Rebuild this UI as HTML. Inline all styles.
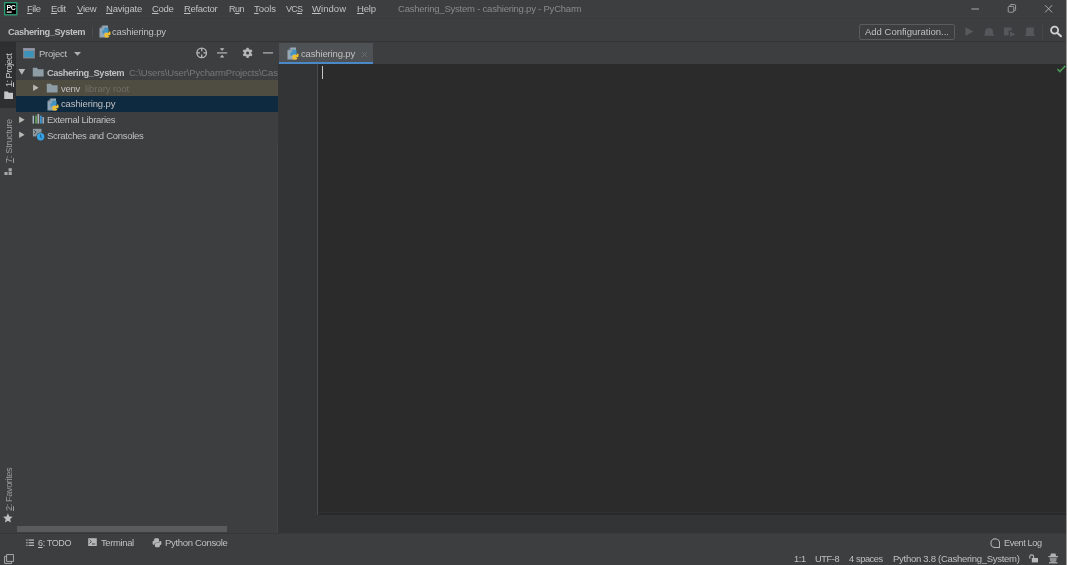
<!DOCTYPE html>
<html lang="en"><head><meta charset="utf-8"><title>Cashering_System - cashiering.py - PyCharm</title>
<style>
html,body{margin:0;padding:0;background:#fff;}
body{width:1068px;height:565px;overflow:hidden;}
#app{position:relative;width:1068px;height:565px;overflow:hidden;background:#fff;font-family:"Liberation Sans",sans-serif;color:#bbbbbb;}
#app div,#app svg{position:absolute;}
.t{position:absolute;will-change:transform;white-space:nowrap;line-height:12px;font-size:9.5px;color:#c0c0c0;}
.t u{text-decoration:underline;text-underline-offset:1px;text-decoration-thickness:0.8px;}
.t.v{transform-origin:0 0;transform:rotate(-90deg);font-size:9.2px;}
#win{left:0;top:0;width:1066px;height:565px;background:#3d3e40;}
#edge{left:1066px;top:0;width:1px;height:565px;background:#9b9b9c;}
.hl{left:0;width:1066px;height:1px;}
#strip-sel{left:0;top:42px;width:16px;height:66px;background:#2d2f30;}
#proj{left:16px;top:42px;width:262px;height:491px;overflow:hidden;}
#row-venv{left:16px;top:80px;width:262px;height:16px;background:#4f4c41;}
#row-sel{left:16px;top:96px;width:262px;height:15.7px;background:#0e2a41;}
#pathclip{left:16px;top:64px;width:262px;height:16px;overflow:hidden;}
#hscroll{left:17px;top:526px;width:210px;height:6.4px;background:#595b5d;}
#tabbar{left:278px;top:42px;width:788px;height:22px;background:#3d3e40;}
#tab{left:279.2px;top:43px;width:94px;height:21px;background:#4e5254;}
#tabline{left:279.2px;top:61.7px;width:94px;height:2.3px;background:#4a88c7;}
#gutter{left:278px;top:64px;width:40px;height:469px;background:#333436;}
#pborder{left:277px;top:143px;width:1px;height:390px;background:#434547;}
#gutline{left:317px;top:64px;width:1px;height:451px;background:#494b4d;}
#editor{left:318px;top:64px;width:748px;height:448px;background:#2b2b2b;}
#edbot{left:318px;top:515px;width:748px;height:18px;background:#333436;}
#eddark{left:318px;top:513px;width:748px;height:2px;background:#28292a;}
#edbotline{left:318px;top:512px;width:748px;height:1px;background:#303132;}
#caret{left:322px;top:66px;width:1.3px;height:13px;background:#c4c4c4;}
#addbtn{left:859.3px;top:23.8px;width:93.8px;height:14.6px;border:0.8px solid #595b5c;border-radius:2px;background:#3d3e40;}
#tbsep{left:1041.5px;top:24px;width:0.8px;height:16px;background:#454749;}
#navsep{left:92.2px;top:27px;width:0.8px;height:10px;background:#494b4d;}

</style></head>
<body>
<div id="app">
<div id="win"></div>
<div id="edge"></div>
<div class="hl" style="top:18px;background:#3a3b3d;"></div>
<div class="hl" style="top:19px;background:#3f4042;"></div>
<div class="hl" style="top:41px;background:#343537;"></div>
<div id="strip-sel"></div>
<div id="row-venv"></div>
<div id="row-sel"></div>
<div id="hscroll"></div>
<div class="hl" style="top:533px;background:#353739;width:278px;"></div>
<div class="hl" style="top:533px;left:278px;width:788px;background:#393a3c;"></div>
<div id="tabbar"></div>
<div id="tab"></div>
<div id="tabline"></div>
<div id="gutter"></div>
<div id="pborder"></div>
<div id="editor"></div>
<div id="edbot"></div>
<div id="edbotline"></div>
<div id="eddark"></div>
<div id="gutline"></div>
<div id="caret"></div>
<div id="addbtn"></div>
<div id="tbsep"></div>
<div id="navsep"></div>
<!-- PC logo -->
<svg style="left:4.2px;top:2px;will-change:transform" width="13.5" height="13.5" viewBox="0 0 13.5 13.5">
 <rect x="0" y="0" width="13.5" height="13.5" rx="0.8" fill="#2f9e74"/>
 <rect x="1.4" y="1.4" width="10.7" height="10.7" fill="#000"/>
 <text x="2.5" y="7.6" font-family="Liberation Sans, sans-serif" font-weight="bold" font-size="7" letter-spacing="-0.45" fill="#fff">PC</text>
 <rect x="2.7" y="9.4" width="5" height="1.4" fill="#d8d8d8"/>
</svg>
<!-- nav bar / tab / tree py icons -->
<svg style="left:98.6px;top:24.9px" width="12.6" height="13.1" viewBox="0 0 13 13.5"><path d="M3.5 0.4 H9.3 V12.9 H0.5 V3.4 Z" fill="#9db1c2" opacity="0.9"/>
   <path d="M0.5 3.4 L3.5 0.4 V3.4 Z" fill="#3d3e40" opacity="0.5"/>
   <path d="M6.2 2.9 h2.4 a1.3 1.3 0 0 1 1.3 1.3 v2.1 a1.3 1.3 0 0 1 -1.3 1.3 h-2.1 a1.2 1.2 0 0 0 -1.2 1.2 v0.5 h-0.5 a1.2 1.2 0 0 1 -1.2 -1.2 v-1.7 a1.2 1.2 0 0 1 1.2 -1.2 h2.5 v-0.5 h-2.4 v-0.5 a1.3 1.3 0 0 1 1.3 -1.3 Z" fill="#3f94c3"/>
   <circle cx="6.3" cy="4" r="0.45" fill="#2b4f66"/>
   <path d="M10.2 6.6 h0.5 a1.2 1.2 0 0 1 1.2 1.2 v1.7 a1.2 1.2 0 0 1 -1.2 1.2 h-2.5 v0.5 h2.4 v0.5 a1.3 1.3 0 0 1 -1.3 1.3 h-2.4 a1.3 1.3 0 0 1 -1.3 -1.3 v-2.1 a1.3 1.3 0 0 1 1.3 -1.3 h2.1 a1.2 1.2 0 0 0 1.2 -1.2 Z" fill="#f0c12e"/></svg>
<svg style="left:286.9px;top:46.9px" width="12.6" height="13.1" viewBox="0 0 13 13.5"><path d="M3.5 0.4 H9.3 V12.9 H0.5 V3.4 Z" fill="#9db1c2" opacity="0.9"/>
   <path d="M0.5 3.4 L3.5 0.4 V3.4 Z" fill="#3d3e40" opacity="0.5"/>
   <path d="M6.2 2.9 h2.4 a1.3 1.3 0 0 1 1.3 1.3 v2.1 a1.3 1.3 0 0 1 -1.3 1.3 h-2.1 a1.2 1.2 0 0 0 -1.2 1.2 v0.5 h-0.5 a1.2 1.2 0 0 1 -1.2 -1.2 v-1.7 a1.2 1.2 0 0 1 1.2 -1.2 h2.5 v-0.5 h-2.4 v-0.5 a1.3 1.3 0 0 1 1.3 -1.3 Z" fill="#3f94c3"/>
   <circle cx="6.3" cy="4" r="0.45" fill="#2b4f66"/>
   <path d="M10.2 6.6 h0.5 a1.2 1.2 0 0 1 1.2 1.2 v1.7 a1.2 1.2 0 0 1 -1.2 1.2 h-2.5 v0.5 h2.4 v0.5 a1.3 1.3 0 0 1 -1.3 1.3 h-2.4 a1.3 1.3 0 0 1 -1.3 -1.3 v-2.1 a1.3 1.3 0 0 1 1.3 -1.3 h2.1 a1.2 1.2 0 0 0 1.2 -1.2 Z" fill="#f0c12e"/></svg>
<svg style="left:47.3px;top:97.8px" width="12.6" height="13.1" viewBox="0 0 13 13.5"><path d="M3.5 0.4 H9.3 V12.9 H0.5 V3.4 Z" fill="#9db1c2" opacity="0.9"/>
   <path d="M0.5 3.4 L3.5 0.4 V3.4 Z" fill="#3d3e40" opacity="0.5"/>
   <path d="M6.2 2.9 h2.4 a1.3 1.3 0 0 1 1.3 1.3 v2.1 a1.3 1.3 0 0 1 -1.3 1.3 h-2.1 a1.2 1.2 0 0 0 -1.2 1.2 v0.5 h-0.5 a1.2 1.2 0 0 1 -1.2 -1.2 v-1.7 a1.2 1.2 0 0 1 1.2 -1.2 h2.5 v-0.5 h-2.4 v-0.5 a1.3 1.3 0 0 1 1.3 -1.3 Z" fill="#3f94c3"/>
   <circle cx="6.3" cy="4" r="0.45" fill="#2b4f66"/>
   <path d="M10.2 6.6 h0.5 a1.2 1.2 0 0 1 1.2 1.2 v1.7 a1.2 1.2 0 0 1 -1.2 1.2 h-2.5 v0.5 h2.4 v0.5 a1.3 1.3 0 0 1 -1.3 1.3 h-2.4 a1.3 1.3 0 0 1 -1.3 -1.3 v-2.1 a1.3 1.3 0 0 1 1.3 -1.3 h2.1 a1.2 1.2 0 0 0 1.2 -1.2 Z" fill="#f0c12e"/></svg>
<!-- tab close -->
<svg style="left:361px;top:51px" width="7" height="7" viewBox="0 0 7 7"><path d="M1 1 L6 6 M6 1 L1 6" stroke="#717476" stroke-width="0.8" fill="none"/></svg>
<!-- window controls -->
<svg style="left:970px;top:3px" width="90" height="12" viewBox="0 0 90 12">
 <path d="M1.4 6 H9" stroke="#a8aaab" stroke-width="1"/>
 <rect x="38.2" y="3.4" width="5.6" height="5.8" rx="1" fill="none" stroke="#a8aaab" stroke-width="0.9"/>
 <path d="M40 3.2 V2.6 a1 1 0 0 1 1 -1 H44.6 a1 1 0 0 1 1 1 V6.6 a1 1 0 0 1 -1 1 H44" fill="none" stroke="#a8aaab" stroke-width="0.9"/>
 <path d="M75 2.2 L82.2 9.4 M82.2 2.2 L75 9.4" stroke="#b4b6b7" stroke-width="0.9" fill="none"/>
</svg>
<!-- toolbar disabled icons -->
<svg style="left:964px;top:26px" width="74" height="12" viewBox="0 0 74 12">
 <path d="M1.4 1.3 L9.4 5.6 L1.4 9.9 Z" fill="#57595b"/>
 <path d="M21 9.6 V6 a4 4 0 0 1 8 0 V9.6 Z M19.6 8.6 h10.8 v1.2 h-10.8 Z" fill="#55575a"/>
 <path d="M40 1.4 h7.6 v3 h-3 v5 h-4.6 Z M46 5.4 L51.6 8.6 L46 10.6 Z" fill="#55575a"/>
 <path d="M62.2 1.6 h7.6 v7.2 h1.2 v1.2 h-10 v-1.2 h1.2 Z" fill="#55575a"/>
</svg>
<!-- search -->
<svg style="left:1048.8px;top:25.2px" width="14" height="13" viewBox="0 0 14 13">
 <circle cx="5.6" cy="5.2" r="3.5" fill="none" stroke="#cfd0d1" stroke-width="1.8"/>
 <path d="M8.4 7.9 L12 11.2" stroke="#cfd0d1" stroke-width="2" stroke-linecap="round"/>
</svg>
<!-- check mark -->
<svg style="left:1056px;top:64px" width="10" height="10" viewBox="0 0 10 10"><path d="M1.4 5 L3.8 7.6 L9.4 1.8" fill="none" stroke="#4a9c57" stroke-width="1.5"/></svg>
<!-- project header -->
<svg style="left:23px;top:48.2px" width="12" height="10.6" viewBox="0 0 12 10.6">
 <rect x="0.2" y="0.2" width="11.6" height="10.2" fill="#878c92"/>
 <rect x="1.3" y="3" width="9.4" height="6.3" fill="#3a93b8"/>
 <rect x="0.2" y="0.2" width="11.6" height="2.2" fill="#9295a8"/>
</svg>
<svg style="left:74px;top:52.2px" width="7" height="4" viewBox="0 0 7 4"><path d="M0 0 H7 L3.5 3.8 Z" fill="#b0b2b3"/></svg>
<svg style="left:195px;top:46px" width="82" height="14" viewBox="0 0 82 14">
 <g fill="none" stroke="#b4b6b7" stroke-width="1.35">
  <circle cx="6.7" cy="6.9" r="4.75"/>
  <path d="M6.7 2 V5.2 M6.7 8.6 V11.8 M1.8 6.9 H5 M8.4 6.9 H11.6"/>
 </g>
 <path d="M22 6.3 H32.2 V7.5 H22 Z" fill="#b4b6b7"/>
 <path d="M24.8 2.3 H29.4 L27.1 5 Z M24.8 11.5 H29.4 L27.1 8.8 Z" fill="#b4b6b7"/>
 <g transform="translate(52.6 6.9)">
  <g fill="#b4b6b7">
   <rect x="-1.15" y="-5.1" width="2.3" height="10.2" rx="0.4"/>
   <rect x="-1.15" y="-5.1" width="2.3" height="10.2" rx="0.4" transform="rotate(60)"/>
   <rect x="-1.15" y="-5.1" width="2.3" height="10.2" rx="0.4" transform="rotate(120)"/>
   <circle r="3.8"/>
  </g>
  <circle r="1.5" fill="#3d3e40"/>
 </g>
 <path d="M68 6.3 H78 V7.5 H68 Z" fill="#b4b6b7"/>
</svg>
<!-- tree icons -->
<svg style="left:18.25px;top:67.9px" width="7.6" height="7.4" viewBox="0 0 10 10"><path d="M0.4 1.4 H9.6 L5 9.2 Z" fill="#b8b8b8"/></svg>
<svg style="left:32.2px;top:66.4px" width="12.4" height="12.4" viewBox="0 0 16 16"><path d="M1 2.2 H6.4 L8 4.3 H15 V13.6 H1 Z" fill="#8e9ca5"/></svg>
<svg style="left:31.9px;top:84.1px" width="7.4" height="7.6" viewBox="0 0 10 10"><path d="M1.5 0.6 L9 5 L1.5 9.4 Z" fill="#b8b8b4"/></svg>
<svg style="left:46.2px;top:81.8px" width="12.4" height="12.4" viewBox="0 0 16 16"><path d="M1 2.2 H6.4 L8 4.3 H15 V13.6 H1 Z" fill="#8e9ca5"/></svg>
<svg style="left:17.95px;top:115.5px" width="7.4" height="7.6" viewBox="0 0 10 10"><path d="M1.5 0.6 L9 5 L1.5 9.4 Z" fill="#b8b8b4"/></svg>
<svg style="left:17.7px;top:131.2px" width="7.4" height="7.6" viewBox="0 0 10 10"><path d="M1.5 0.6 L9 5 L1.5 9.4 Z" fill="#b8b8b4"/></svg>
<!-- external libraries -->
<svg style="left:32px;top:113px" width="13" height="11" viewBox="0 0 13 11">
 <rect x="0.6" y="2.6" width="1.4" height="8" fill="#a9b7c6"/>
 <rect x="3.2" y="2.6" width="1.7" height="8" fill="#62a55c"/>
 <rect x="5.5" y="1" width="1.7" height="9.6" fill="#b0b6ba"/>
 <rect x="8" y="2.6" width="1.8" height="8" fill="#3d94d1"/>
 <rect x="10.5" y="4" width="1.4" height="6.6" fill="#a9b7c6"/>
</svg>
<!-- scratches -->
<svg style="left:32px;top:128.4px" width="14" height="13.4" viewBox="0 0 14 13.4">
 <rect x="0.9" y="0.8" width="8.6" height="7.6" fill="#8f9aa1"/>
 <path d="M2.2 2.4 L4.2 4.2 L2.2 6" stroke="#3d3e40" stroke-width="0.9" fill="none"/>
 <circle cx="8.6" cy="8.8" r="4.3" fill="#3d3e40"/>
 <circle cx="8.6" cy="8.8" r="3.7" fill="#35a3e4"/>
 <path d="M8.6 6.6 V9 L10 10.2" stroke="#1d4f78" stroke-width="0.9" fill="none"/>
</svg>
<!-- left strip icons -->
<svg style="left:3.6px;top:91px" width="9.6" height="8.4" viewBox="0 0 9.6 8.4"><path d="M0.2 0.4 H3.8 L4.8 1.8 H9.4 V8.2 H0.2 Z" fill="#c4c6c7"/></svg>
<svg style="left:4.2px;top:167.8px" width="8" height="7.4" viewBox="0 0 8 7.4">
 <rect x="4.6" y="0.2" width="3.2" height="3.2" fill="#a4a6a7"/>
 <rect x="0.4" y="4" width="3.2" height="3.2" fill="#a4a6a7"/>
 <rect x="4.6" y="4" width="3.2" height="3.2" fill="#a4a6a7"/>
</svg>
<svg style="left:3.4px;top:513.4px" width="9.8" height="9.8" viewBox="0 0 10 10"><path d="M5 0.3 L6.45 3.55 L9.9 3.9 L7.3 6.2 L8.05 9.7 L5 7.9 L1.95 9.7 L2.7 6.2 L0.1 3.9 L3.55 3.55 Z" fill="#bfc1c2"/></svg>
<!-- bottom strip icons -->
<svg style="left:25.6px;top:538.6px" width="8.4" height="7.6" viewBox="0 0 8.4 7.6">
 <g fill="#b2b4b5"><rect x="0.2" y="0.4" width="1.4" height="1.3"/><rect x="2.6" y="0.4" width="5.6" height="1.3"/>
 <rect x="0.2" y="3.1" width="1.4" height="1.3"/><rect x="2.6" y="3.1" width="5.6" height="1.3"/>
 <rect x="0.2" y="5.8" width="1.4" height="1.3"/><rect x="2.6" y="5.8" width="5.6" height="1.3"/></g>
</svg>
<svg style="left:88px;top:538px" width="9" height="8.4" viewBox="0 0 9 8.4">
 <rect x="0.2" y="0.2" width="8.6" height="8" fill="#b4b6b7"/>
 <path d="M1.6 2 L3.4 3.7 L1.6 5.4" stroke="#3d3e40" stroke-width="0.9" fill="none"/>
 <path d="M4 6 H7.2" stroke="#3d3e40" stroke-width="0.9"/>
</svg>
<svg style="left:152px;top:538px" width="10" height="9.6" viewBox="0 0 10 9.6">
 <path d="M3.4 0.3 h2.4 a1.2 1.2 0 0 1 1.2 1.2 v2 a1.2 1.2 0 0 1 -1.2 1.2 h-2 a1.2 1.2 0 0 0 -1.2 1.2 v0.8 h-0.8 a1.2 1.2 0 0 1 -1.2 -1.2 v-1.6 a1.2 1.2 0 0 1 1.2 -1.2 h0.4 v-1.2 a1.2 1.2 0 0 1 1.2 -1.2 Z" fill="#b4b6b7"/>
 <path d="M6.6 9.3 h-2.4 a1.2 1.2 0 0 1 -1.2 -1.2 v-2 a1.2 1.2 0 0 1 1.2 -1.2 h2 a1.2 1.2 0 0 0 1.2 -1.2 v-0.8 h0.8 a1.2 1.2 0 0 1 1.2 1.2 v1.6 a1.2 1.2 0 0 1 -1.2 1.2 h-0.4 v1.2 a1.2 1.2 0 0 1 -1.2 1.2 Z" fill="#b4b6b7"/>
</svg>
<!-- event log -->
<svg style="left:989.6px;top:537.8px" width="10.6" height="10.2" viewBox="0 0 10.6 10.2">
 <path d="M5.3 0.8 a4.4 4.4 0 1 0 0 8.8 H9.6 V5.2 a4.4 4.4 0 0 0 -4.3 -4.4 Z" fill="none" stroke="#b2b4b5" stroke-width="1.1"/>
</svg>
<!-- status bar -->
<svg style="left:3.8px;top:553.8px" width="10.2" height="10" viewBox="0 0 10.2 10">
 <path d="M2.6 0.6 H9.6 V7.4 H2.6 Z" fill="none" stroke="#a8aaab" stroke-width="1"/>
 <path d="M2.6 2.4 H0.6 V9.4 H7.6 V7.4" fill="none" stroke="#a8aaab" stroke-width="1"/>
</svg>
<svg style="left:1028.6px;top:554.4px" width="9.6" height="8.8" viewBox="0 0 9.6 8.8">
 <rect x="2.8" y="4" width="6.4" height="4.4" fill="#b8babb"/>
 <path d="M0.8 4.6 V2.8 a1.9 1.9 0 0 1 3.8 0 V4.2" fill="none" stroke="#b8babb" stroke-width="1.1"/>
</svg>
<svg style="left:1048px;top:553px" width="10.4" height="10.6" viewBox="0 0 10.4 10.6">
 <path d="M3 0.6 H7.4 L8.2 3 H10 V4.2 H0.4 V3 H2.2 Z" fill="#b0b2b3"/>
 <path d="M1.8 4.8 H8.6 V6.6 a3.4 3 0 0 1 -6.8 0 Z" fill="#8d8f90"/>
 <rect x="1" y="9.2" width="8.4" height="1.2" fill="#b0b2b3"/>
</svg>


<span class="t" id="x_m1" style="left:26.70px;top:3.25px;font-size:9.38px;letter-spacing:-0.380px;"><u>F</u>ile</span>
<span class="t" id="x_m2" style="left:50.80px;top:3.22px;font-size:9.47px;letter-spacing:-0.380px;"><u>E</u>dit</span>
<span class="t" id="x_m3" style="left:76.50px;top:3.21px;font-size:9.5px;letter-spacing:-0.246px;"><u>V</u>iew</span>
<span class="t" id="x_m4" style="left:105.60px;top:3.21px;font-size:9.5px;letter-spacing:-0.174px;"><u>N</u>avigate</span>
<span class="t" id="x_m5" style="left:151.50px;top:3.21px;font-size:9.5px;letter-spacing:-0.278px;"><u>C</u>ode</span>
<span class="t" id="x_m6" style="left:183.80px;top:3.21px;font-size:9.5px;letter-spacing:-0.317px;"><u>R</u>efactor</span>
<span class="t" id="x_m7" style="left:228.50px;top:3.38px;font-size:9.0px;letter-spacing:-0.525px;">R<u>u</u>n</span>
<span class="t" id="x_m8" style="left:254.00px;top:3.21px;font-size:9.5px;letter-spacing:-0.047px;"><u>T</u>ools</span>
<span class="t" id="x_m9" style="left:285.90px;top:3.38px;font-size:9.0px;letter-spacing:-0.809px;">VC<u>S</u></span>
<span class="t" id="x_m10" style="left:312.00px;top:3.21px;font-size:9.5px;letter-spacing:0.041px;"><u>W</u>indow</span>
<span class="t" id="x_m11" style="left:356.50px;top:3.21px;font-size:9.5px;letter-spacing:-0.188px;"><u>H</u>elp</span>
<span class="t" id="x_title" style="left:397.90px;top:3.21px;font-size:9.5px;letter-spacing:-0.218px;color:#8a8a8a;">Cashering_System - cashiering.py - PyCharm</span>
<span class="t" id="x_n1" style="left:8.40px;top:25.99px;font-size:9.25px;letter-spacing:-0.380px;font-weight:bold;">Cashering_System</span>
<span class="t" id="x_n2" style="left:112.00px;top:25.91px;font-size:9.5px;letter-spacing:-0.165px;">cashiering.py</span>
<span class="t" id="x_addc" style="left:864.50px;top:25.71px;font-size:9.5px;letter-spacing:0.001px;">Add Configuration...</span>
<span class="t" id="x_ph" style="left:38.70px;top:47.61px;font-size:9.5px;letter-spacing:-0.246px;">Project</span>
<span class="t" id="x_tab" style="left:301.20px;top:47.71px;font-size:9.5px;letter-spacing:-0.149px;">cashiering.py</span>
<span class="t" id="x_r1" style="left:46.80px;top:67.09px;font-size:9.25px;letter-spacing:-0.380px;font-weight:bold;">Cashering_System</span>
<span class="t" id="x_r1p" style="left:129.20px;top:67.01px;font-size:9.5px;letter-spacing:-0.145px;color:#787878;width:148.8px;overflow:hidden;">C:&#92;Users&#92;User&#92;PycharmProjects&#92;Cashering_System</span>
<span class="t" id="x_r2" style="left:60.90px;top:82.61px;font-size:9.5px;letter-spacing:-0.259px;">venv</span>
<span class="t" id="x_r2l" style="left:84.80px;top:82.61px;font-size:9.5px;letter-spacing:-0.061px;color:#6f6f67;">library root</span>
<span class="t" id="x_r3" style="left:61.20px;top:98.41px;font-size:9.5px;letter-spacing:-0.132px;">cashiering.py</span>
<span class="t" id="x_r4" style="left:46.80px;top:113.91px;font-size:9.5px;letter-spacing:-0.325px;">External Libraries</span>
<span class="t" id="x_r5" style="left:46.80px;top:129.61px;font-size:9.5px;letter-spacing:-0.299px;">Scratches and Consoles</span>
<span class="t" id="x_b1" style="left:37.60px;top:537.48px;font-size:9.0px;letter-spacing:-0.384px;"><u>6</u>: TODO</span>
<span class="t" id="x_b2" style="left:101.00px;top:537.31px;font-size:9.49px;letter-spacing:-0.380px;">Terminal</span>
<span class="t" id="x_b3" style="left:165.10px;top:537.31px;font-size:9.5px;letter-spacing:-0.321px;">Python Console</span>
<span class="t" id="x_b4" style="left:1003.90px;top:537.43px;font-size:9.15px;letter-spacing:-0.380px;">Event Log</span>
<span class="t" id="x_s1" style="left:793.50px;top:552.60px;font-size:9.24px;letter-spacing:-0.380px;">1:1</span>
<span class="t" id="x_s2" style="left:815.20px;top:552.59px;font-size:9.25px;letter-spacing:-0.380px;">UTF-8</span>
<span class="t" id="x_s3" style="left:849.20px;top:552.61px;font-size:9.21px;letter-spacing:-0.380px;">4 spaces</span>
<span class="t" id="x_s4" style="left:893.10px;top:552.51px;font-size:9.5px;letter-spacing:-0.277px;">Python 3.8 (Cashering_System)</span>
<span class="t v" id="x_v1" style="left:3.40px;top:86.50px;color:#c8c8c8;letter-spacing:-0.548px;"><u>1</u>: Project</span>
<span class="t v" id="x_v2" style="left:2.80px;top:163.00px;color:#9a9a9a;letter-spacing:-0.301px;"><u>7</u>: Structure</span>
<span class="t v" id="x_v3" style="left:2.80px;top:511.40px;color:#9a9a9a;letter-spacing:-0.401px;"><u>2</u>: Favorites</span>
</div>
</body></html>
